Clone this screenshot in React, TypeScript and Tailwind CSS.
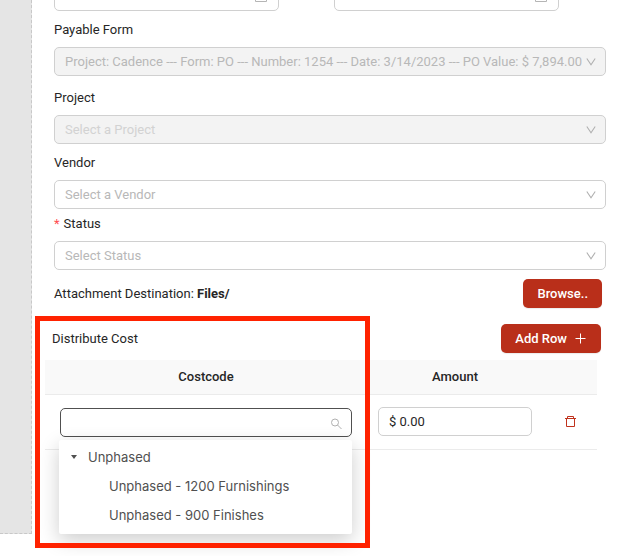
import { useState } from "react";

const costcodes = ["Unphased - 1200 Furnishings", "Unphased - 900 Finishes"];

const ChevronDown = () => (
  <svg
    viewBox="0 0 10 10"
    className="pointer-events-none absolute right-2.5 top-2.5 size-2.5 text-[#b0b0b0]"
    fill="none"
    stroke="currentColor"
    strokeWidth="1.1"
    aria-hidden="true"
  >
    <path d="M0.8 1.5 L5 7.8 L9.2 1.5" />
  </svg>
);

const CalendarIcon = () => (
  <svg
    viewBox="0 0 12 12"
    className="pointer-events-none absolute right-3 top-2 size-3 text-[#b5b5b5]"
    fill="none"
    stroke="currentColor"
    aria-hidden="true"
  >
    <path d="M0.5 1.5h11v10h-11z M0.5 4.5h11 M3.5 0v3 M8.5 0v3" />
  </svg>
);

const DateField = ({ label }: { label: string }) => (
  <div className="relative w-[225px]">
    <input
      type="text"
      aria-label={label}
      placeholder="Select date"
      className="block h-[29px] w-full rounded-[5px] border border-[#d0d0d0] px-2.5 pb-1 placeholder:text-[#bfbfbf]"
    />
    <CalendarIcon />
  </div>
);

type SelectFieldProps = {
  id: string;
  label: string;
  text: string;
  required?: boolean;
  disabled?: boolean;
  className?: string;
  textClassName?: string;
};

const SelectField = ({
  id,
  label,
  text,
  required,
  disabled,
  className,
  textClassName = "text-[#b8b8b8]",
}: SelectFieldProps) => (
  <div className={className}>
    <label htmlFor={id} className="mb-[7px] flex h-5 items-center gap-1">
      {required && <span className="text-[#ff4d4f]">*</span>}
      {label}
    </label>
    <div className="relative">
      <select
        id={id}
        disabled={disabled}
        className={`block h-[29px] w-full appearance-none rounded-[5px] border border-[#d0d0d0] bg-white px-2.5 opacity-100 disabled:bg-[#f3f3f3] ${textClassName}`}
      >
        <option>{text}</option>
      </select>
      <ChevronDown />
    </div>
  </div>
);

const CostcodeSelect = () => {
  const [expanded, setExpanded] = useState(true);

  return (
    <div className="relative">
      <input
        type="text"
        aria-label="Costcode"
        className="block h-[29px] w-full rounded-[5px] border border-[#505050] pl-2.5 pr-7 outline-none"
      />
      <svg
        viewBox="0 0 12 12"
        className="absolute right-2.5 top-2.5 size-3 text-[#b0b0b0]"
        fill="none"
        stroke="currentColor"
        aria-hidden="true"
      >
        <circle cx="5" cy="4.5" r="3.5" />
        <path d="M7.5 7 L11.5 11" />
      </svg>
      <div className="absolute -left-px right-0 top-8 rounded-xs bg-white pt-[3px] pb-1 font-['Inter','Roboto',sans-serif] text-[#505050] shadow-[0_6px_20px_rgba(0,0,0,0.2)]">
        <button
          type="button"
          aria-expanded={expanded}
          onClick={() => setExpanded(!expanded)}
          className="flex h-[29px] w-full items-center gap-[11px] pl-3"
        >
          <svg viewBox="0 0 6 4" className="h-1 w-1.5" fill="currentColor" aria-hidden="true">
            <path d="M0 0h6L3 4z" />
          </svg>
          Unphased
        </button>
        {expanded &&
          costcodes.map((code) => (
            <button
              key={code}
              type="button"
              className="flex h-[29px] w-full items-center pl-[50px]"
            >
              {code}
            </button>
          ))}
      </div>
    </div>
  );
};

export default function App() {
  return (
    <div className="flex min-h-screen items-start overflow-hidden bg-white font-['Roboto','Liberation_Sans',sans-serif] text-[13px] leading-5 text-[#262626]">
      <aside className="h-[534px] w-8 shrink-0 border-r border-b border-dashed border-[#c8c8c8] bg-[#e5e5e5]" />
      <main className="min-w-0 flex-1 pr-[17px] pl-[22px]">
        <div className="flex h-[11px] items-end gap-[55px]">
          <DateField label="Start date" />
          <DateField label="End date" />
        </div>

        <SelectField
          id="payable-form"
          label="Payable Form"
          text="Project: Cadence --- Form: PO --- Number: 1254 --- Date: 3/14/2023 --- PO Value: $ 7,894.00"
          disabled
          className="mt-[9px]"
        />
        <SelectField
          id="project"
          label="Project"
          text="Select a Project"
          disabled
          className="mt-3"
          textClassName="text-[#d2d2d2]"
        />
        <SelectField
          id="vendor"
          label="Vendor"
          text="Select a Vendor"
          className="mt-[9px]"
        />
        <SelectField
          id="status"
          label="Status"
          text="Select Status"
          required
          className="mt-[5px]"
        />

        <div className="mt-[9px] mr-1 flex items-center justify-between">
          <p>
            Attachment Destination: <b>Files/</b>
          </p>
          <button
            type="button"
            className="h-[29px] rounded-[5px] bg-[#b92f1a] px-3.5 font-medium text-white shadow-[0_1px_1px_rgba(0,0,0,0.08)]"
          >
            Browse..
          </button>
        </div>

        <section className="relative mt-4 mr-[9px] -ml-[9px]">
          <div className="-mr-1 flex items-center justify-between pl-[7px]">
            <h2>Distribute Cost</h2>
            <button
              type="button"
              className="flex h-[29px] items-center gap-2 rounded-[5px] bg-[#b92f1a] px-3.5 font-medium text-white shadow-[0_1px_1px_rgba(0,0,0,0.08)]"
            >
              Add Row
              <svg viewBox="0 0 12 12" className="size-3" stroke="currentColor" aria-hidden="true">
                <path d="M5.5 0.5v10M0.5 5.5h10" />
              </svg>
            </button>
          </div>
          <table className="mt-[7px] w-full table-fixed">
            <thead>
              <tr className="h-[34px] border-b border-[#ebebeb] bg-[#f9f9f9]">
                <th className="font-medium">Costcode</th>
                <th className="w-[176px] font-medium">Amount</th>
                <th className="w-[54px]" aria-label="Actions" />
              </tr>
            </thead>
            <tbody>
              <tr className="h-[55px] border-b border-[#ebebeb] align-top">
                <td className="px-[15px] pt-[13px]">
                  <CostcodeSelect />
                </td>
                <td className="px-[11px] pt-3">
                  <input
                    type="text"
                    aria-label="Amount"
                    defaultValue="$ 0.00"
                    className="block h-[29px] w-full rounded-[5px] border border-[#d0d0d0] px-2.5"
                  />
                </td>
                <td className="pt-5">
                  <button
                    type="button"
                    aria-label="Delete row"
                    className="mx-auto block text-[#c0321d]"
                  >
                    <svg viewBox="0 0 12 12" className="size-3" fill="none" stroke="currentColor">
                      <path d="M1 3.5h11M3.5 3.5v-2h6v2M2.5 3.5v8h8v-8" />
                    </svg>
                  </button>
                </td>
              </tr>
            </tbody>
          </table>
          {/* highlight around the costcode column */}
          <div className="pointer-events-none absolute -top-2 right-[227px] -bottom-[98px] -left-2.5 border-5 border-[#ff2200]" />
        </section>
      </main>
    </div>
  );
}
